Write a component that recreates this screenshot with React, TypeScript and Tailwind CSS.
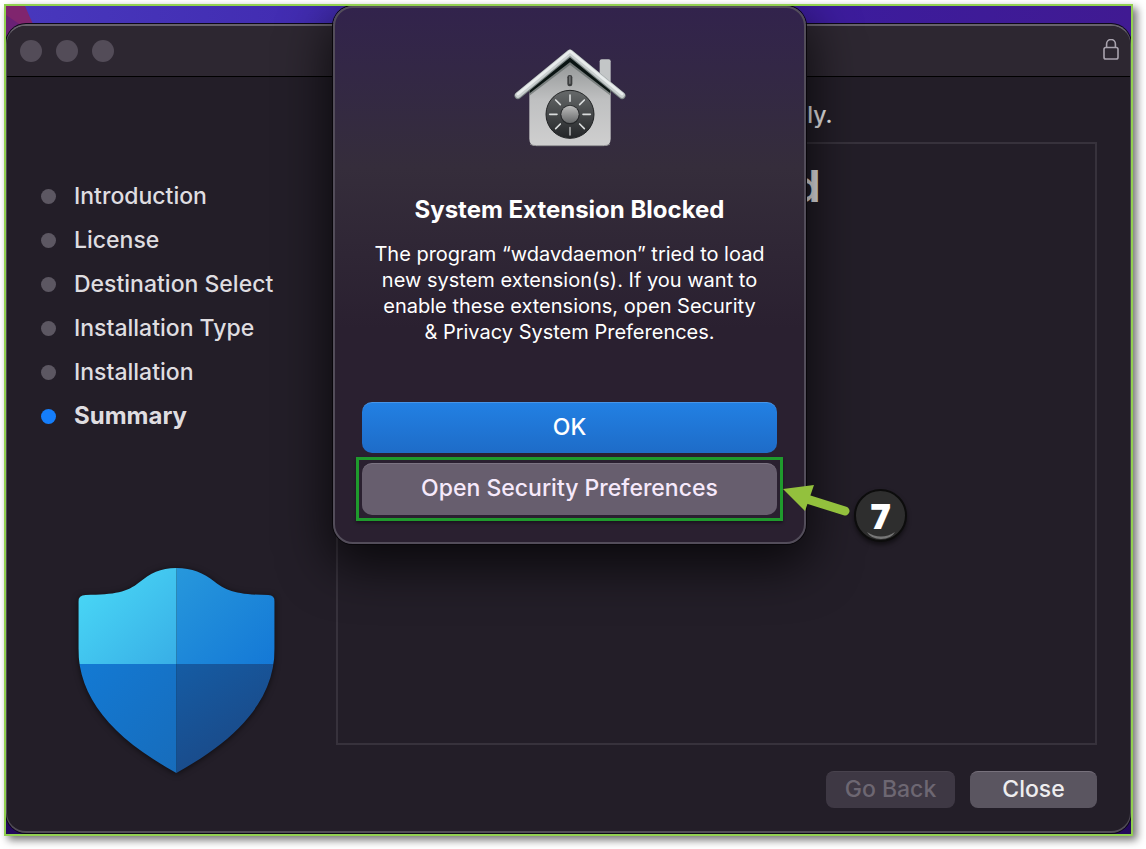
import React from 'react';

interface Step {
  label: string;
  current?: boolean;
}

const STEPS: Step[] = [
  { label: 'Introduction' },
  { label: 'License' },
  { label: 'Destination Select' },
  { label: 'Installation Type' },
  { label: 'Installation' },
  { label: 'Summary', current: true },
];

const LockIcon = () => (
  <svg width="16" height="24" viewBox="0 0 16 24" fill="none" stroke="#a9a3ae" strokeWidth="1.6">
    <rect x="1" y="8.5" width="14" height="11.5" rx="1.8" />
    <path d="M3.6 8.5V4.9a4.4 4.4 0 0 1 8.8 0v3.6" />
  </svg>
);

const ShieldLogo = () => (
  <svg width="197" height="205" viewBox="54 54 589 615" className="drop-shadow-[0_1px_3px_rgba(0,0,0,0.6)]">
    <defs>
      <clipPath id="shield">
        <path d="M348 54C300 54 270 70 237 97C200 127 165 134 76 135Q54 135 54 155V295C54 440 150 560 348 669C546 560 643 440 643 295V155Q643 135 624 135C535 134 500 124 463 95C428 69 396 54 348 54Z" />
      </clipPath>
      <linearGradient id="s1" x1="0" y1="0" x2="1" y2="1">
        <stop offset="0" stopColor="#4bdcf8" />
        <stop offset="1" stopColor="#38aee6" />
      </linearGradient>
      <linearGradient id="s2" x1="0" y1="0" x2="1" y2="1">
        <stop offset="0" stopColor="#2798dc" />
        <stop offset="1" stopColor="#1478d6" />
      </linearGradient>
      <linearGradient id="s3" x1="0" y1="0" x2="1" y2="1">
        <stop offset="0" stopColor="#137ad4" />
        <stop offset="1" stopColor="#176cbb" />
      </linearGradient>
      <linearGradient id="s4" x1="0" y1="0" x2="0.6" y2="1">
        <stop offset="0" stopColor="#155ca4" />
        <stop offset="1" stopColor="#1b4784" />
      </linearGradient>
    </defs>
    <g clipPath="url(#shield)">
      <rect x="50" y="50" width="299" height="292" fill="url(#s1)" />
      <rect x="349" y="50" width="299" height="292" fill="url(#s2)" />
      <rect x="50" y="342" width="299" height="330" fill="url(#s3)" />
      <rect x="349" y="342" width="299" height="330" fill="url(#s4)" />
    </g>
  </svg>
);

const HouseIcon = () => (
  <svg width="112" height="100" viewBox="70 40 336 300">
    <defs>
      <linearGradient id="wall" x1="0" y1="0" x2="0" y2="1">
        <stop offset="0.1" stopColor="#959898" />
        <stop offset="0.5" stopColor="#bfc0c1" />
        <stop offset="1" stopColor="#cfcfcf" />
      </linearGradient>
      <linearGradient id="dial" x1="0" y1="0" x2="0" y2="1">
        <stop offset="0" stopColor="#66696a" />
        <stop offset="1" stopColor="#242628" />
      </linearGradient>
      <linearGradient id="knob" x1="0" y1="0" x2="0" y2="1">
        <stop offset="0" stopColor="#bcbcbc" />
        <stop offset="1" stopColor="#666869" />
      </linearGradient>
      <clipPath id="wallclip">
        <path d="M238 58L360 160V312Q360 334 338 334H138Q116 334 116 312V160Z" />
      </clipPath>
    </defs>
    <rect x="327" y="74" width="33" height="110" rx="6" fill="#c3c6c7" />
    <path d="M238 58L360 160V312Q360 334 338 334H138Q116 334 116 312V160Z" fill="url(#wall)" />
    <path d="M118 328Q124 333 138 333H338Q352 333 358 328" fill="none" stroke="#8f8f91" strokeWidth="3" />
    <g clipPath="url(#wallclip)">
      <path d="M80 197L238 77L396 197" fill="none" stroke="#59605f" strokeWidth="22" opacity="0.6" />
      <path d="M80 193L238 71L396 193" fill="none" stroke="#0a1412" strokeWidth="18" />
    </g>
    <path d="M82 183L238 55L394 183" fill="none" stroke="#7f8888" strokeWidth="21" strokeLinecap="round" strokeLinejoin="round" />
    <path d="M82 181L238 53L394 181" fill="none" stroke="#c9cfcf" strokeWidth="17" strokeLinecap="round" strokeLinejoin="round" />
    <path d="M82 178L238 50L394 178" fill="none" stroke="#e9eded" strokeWidth="8" strokeLinecap="round" strokeLinejoin="round" />
    <rect x="230" y="121" width="15" height="34" rx="7" fill="#3b3d3e" />
    <rect x="235" y="124" width="5" height="24" rx="2" fill="#707273" />
    <circle cx="238" cy="239" r="72" fill="url(#dial)" stroke="#222425" strokeWidth="3" />
    <g stroke="#d9dcdc" strokeWidth="5" strokeLinecap="round">
      <path d="M238 181V200M177 239H199M277 239H299M195 196L209 210M281 196L267 210M195 282L209 268M281 282L267 268" />
      <path d="M238 279V301" stroke="#a6a8a8" />
    </g>
    <circle cx="238" cy="240" r="29" fill="#252729" />
    <circle cx="238" cy="239" r="26" fill="url(#knob)" />
  </svg>
);

const Callout = () => (
  <div className="absolute left-full top-5 ml-[5px] flex items-start gap-[2px]">
    <svg width="70" height="36" viewBox="0 0 70 36">
      <path d="M20 14.5L63 28" stroke="#93c13d" strokeWidth="9" strokeLinecap="round" />
      <path d="M1 6L32 2L23 28Z" fill="#93c13d" />
    </svg>
    <div className="relative mt-[6px] flex h-[53px] w-[53px] shrink-0 items-center justify-center rounded-full border-2 border-[#0c0c0c] bg-[#2e2e2e] shadow-[0_3px_4px_rgba(0,0,0,0.5)]">
      <span className="font-['Open_Sans',sans-serif] text-[36px] font-extrabold leading-none text-white">7</span>
      <svg width="30" height="8" viewBox="0 0 30 8" className="absolute bottom-0">
        <path d="M1 0Q15 9 29 0Q25 7 15 7T1 0Z" fill="#777" />
      </svg>
    </div>
  </div>
);

const BlockedDialog = () => (
  <div className="absolute inset-x-0 top-0 flex justify-center pl-0.5">
    <div
      role="dialog"
      aria-labelledby="dialog-title"
      className="flex w-[473px] flex-col items-center rounded-[20px] border-2 border-[#534d5a] bg-linear-to-b from-[#32234c] via-[#352d3b] via-30% to-[#2a2030] to-60% px-[27px] pt-10 pb-[27px] text-white shadow-[0_0_0_1px_#08060a,0_18px_50px_4px_rgba(0,0,0,0.7)]"
    >
      <HouseIcon />
      <h2 id="dialog-title" className="mt-[46px] text-[24px] leading-8 font-bold">System Extension Blocked</h2>
      <p className="mt-[15px] text-center text-[20px] leading-[26px]">
        The program “wdavdaemon” tried to load<br />
        new system extension(s). If you want to<br />
        enable these extensions, open Security<br />
        &amp; Privacy System Preferences.
      </p>
      <button className="mt-[57px] h-[51px] w-full rounded-[10px] border-t border-[#4795e8] bg-linear-to-b from-[#2280e3] to-[#1e6cc8] pb-0.5 text-[23px] font-medium">
        OK
      </button>
      <div className="relative mt-[10px] w-full">
        <button className="block h-[52px] w-full rounded-[10px] border-t border-[#7b7382] bg-[#675e6e] pb-0.5 text-[23px] font-medium text-[#f6e9fb]">
          Open Security Preferences
        </button>
        <div className="pointer-events-none absolute -inset-[6px] border-3 border-[#1f9a2d] shadow-[0_2px_3px_rgba(0,0,0,0.4)]" />
        <Callout />
      </div>
    </div>
  </div>
);

const InstallerWindow = () => (
  <div className="flex flex-1 flex-col overflow-hidden rounded-[20px] border-x border-t-2 border-b-2 border-[#514c56] border-t-[#67626b] bg-[#231e28] shadow-[0_0_0_1px_#0c0818]">
    <header className="flex h-[51px] shrink-0 items-center justify-between border-b border-black bg-[#2d2731] pr-[11px] pl-[13px]">
      <div className="flex gap-[14px]">
        <span className="h-[22px] w-[22px] rounded-full bg-[#534c58]" />
        <span className="h-[22px] w-[22px] rounded-full bg-[#534c58]" />
        <span className="h-[22px] w-[22px] rounded-full bg-[#534c58]" />
      </div>
      <LockIcon />
    </header>

    <div className="flex flex-1">
      <aside className="flex w-[329px] shrink-0 flex-col pt-[97px] pb-[58px]">
        <ol className="pl-[34px] text-[23px] text-[#dfdde0]">
          {STEPS.map(step => (
            <li key={step.label} className="flex h-11 items-center gap-[18px]">
              <span className={step.current ? 'h-[15px] w-[15px] rounded-full bg-[#157efb]' : 'h-[15px] w-[15px] rounded-full bg-[#5c5762]'} />
              <span className={step.current ? 'text-[24px] font-bold' : 'font-medium'}>{step.label}</span>
            </li>
          ))}
        </ol>
        <div className="mt-auto pl-[71px]">
          <ShieldLogo />
        </div>
      </aside>

      <main className="flex flex-1 flex-col pt-[22px] pr-[33px] pb-[23px]">
        <p className="pl-[5px] text-[23px] leading-8 font-medium text-[#f1f0f2]">The installation was completed successfully.</p>
        <section className="mt-[11px] flex-1 border-2 border-[#37323c] pt-[16px] pl-6 text-center">
          <h1 className="text-[44px] leading-[52px] font-bold text-[#f1f0f2]">Installed</h1>
        </section>
        <footer className="mt-[26px] flex justify-end gap-[15px] text-[23px] font-medium">
          <button disabled className="h-[37px] w-[129px] rounded-lg border-t border-[#48424d] bg-[#3e3844] pb-0.5 leading-none text-[#6d6772]">Go Back</button>
          <button className="h-[37px] w-[127px] rounded-lg border-t border-[#77717c] bg-[#5a5560] pb-0.5 leading-none text-[#eeedef]">Close</button>
        </footer>
      </main>
    </div>
  </div>
);

const App: React.FC = () => (
  <div className="flex min-h-screen flex-col bg-white pt-1 pr-[13px] pb-[13px] pl-1 font-['Inter',sans-serif]">
    <div className="relative flex flex-1 flex-col overflow-hidden border-2 border-[#92d050] bg-[linear-gradient(to_bottom,transparent_50%,#22085a),linear-gradient(to_right,#4838bd,#3a1da2_60%,#401a92)] pt-[18px] pb-px shadow-[4px_4px_8px_rgba(0,0,0,0.55)]">
      <svg width="30" height="34" viewBox="0 0 30 34" className="absolute top-0 left-0">
        <path d="M0 0H19L34 34H0Z" fill="#80256e" />
        <path d="M0 9L22 24V34H0Z" fill="#6a2176" />
      </svg>
      <div className="relative flex flex-1 flex-col">
        <InstallerWindow />
      </div>
      <BlockedDialog />
    </div>
  </div>
);

export default App;
